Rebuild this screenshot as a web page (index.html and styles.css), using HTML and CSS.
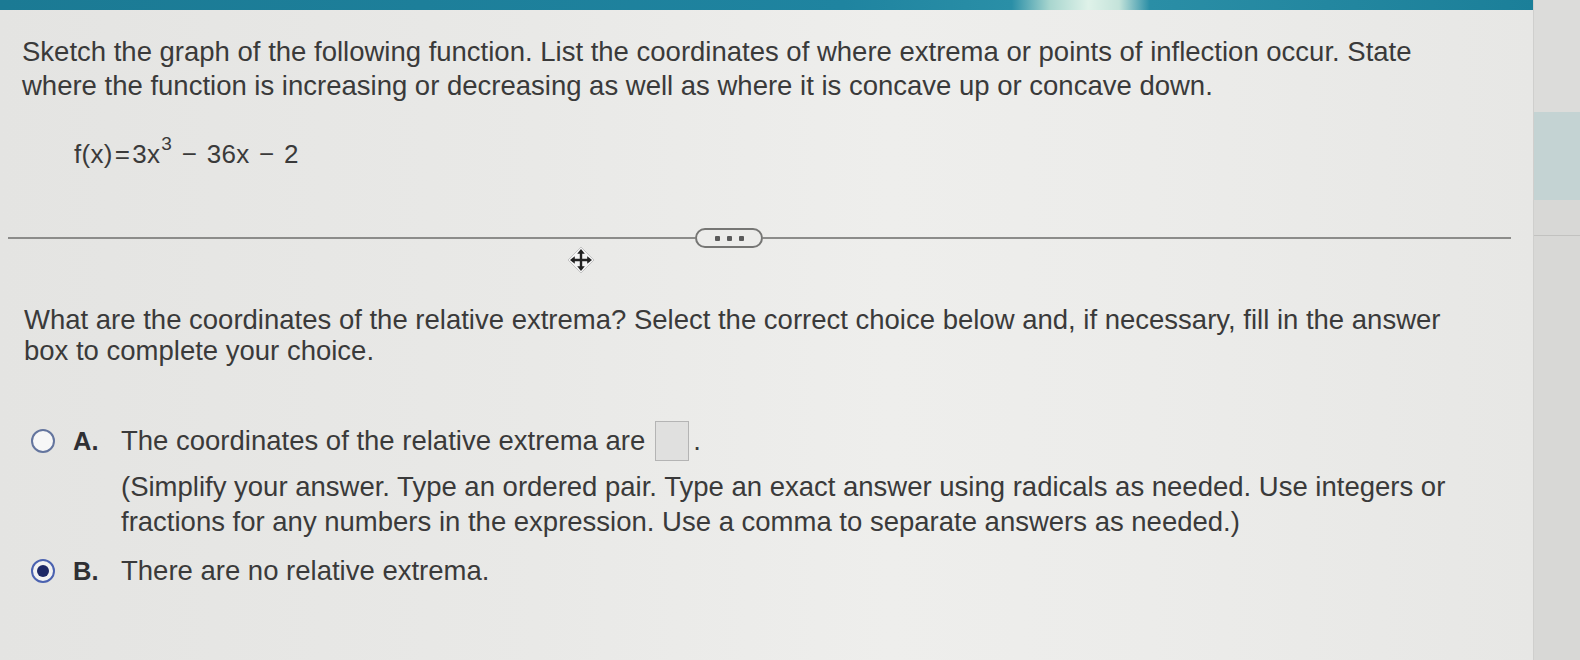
FILE: index.html
```html
<!DOCTYPE html>
<html>
<head>
<meta charset="utf-8">
<link rel="stylesheet" href="styles.css">
</head>
<body>
<div class="page">
  <div class="main">
    <div class="topbar"></div>
    <div class="content">
      <p class="prompt">Sketch the graph of the following function. List the coordinates of where extrema or points of inflection occur. State where the function is increasing or decreasing as well as where it is concave up or concave down.</p>
      <p class="func">f(x)<span class="eq">=</span>3x<sup>3</sup> <span class="op">&#8722;</span> 36x <span class="op">&#8722;</span> 2</p>
    </div>
    <div class="divider">
      <span class="rule rule-left"></span>
      <span class="more"><i></i><i></i><i></i></span>
      <span class="rule"></span>
    </div>
    <div class="mover">
      <svg width="30" height="30" viewBox="0 0 30 30">
        <path d="M15 2 L28 15 L15 28 L2 15 Z" fill="#f4f4f4" stroke="#c4c4c4" stroke-width="1"/>
        <path d="M15 6 V24 M6 15 H24" stroke="#222" stroke-width="2.4"/>
        <path d="M15 4 L11.2 8.8 H18.8 Z M15 26 L11.2 21.2 H18.8 Z M4 15 L8.8 11.2 V18.8 Z M26 15 L21.2 11.2 V18.8 Z" fill="#222"/>
      </svg>
    </div>
    <div class="content">
      <p class="question">What are the coordinates of the relative extrema? Select the correct choice below and, if necessary, fill in the answer box to complete your choice.</p>
      <div class="choice choice-a">
        <span class="radio"></span>
        <span class="letter">A.</span>
        <div class="ctext">
          <div class="cline">The coordinates of the relative extrema are <span class="ansbox"></span>.</div>
          <div class="hint">(Simplify your answer. Type an ordered pair. Type an exact answer using radicals as needed. Use integers or fractions for any numbers in the expression. Use a comma to separate answers as needed.)</div>
        </div>
      </div>
      <div class="choice choice-b">
        <span class="radio checked"></span>
        <span class="letter">B.</span>
        <div class="ctext">
          <div class="cline">There are no relative extrema.</div>
        </div>
      </div>
    </div>
  </div>
  <div class="side">
    <div class="side-top"></div>
    <div class="side-teal"></div>
    <div class="side-line"></div>
  </div>
</div>
</body>
</html>
```
FILE: styles.css
```css
* { box-sizing: border-box; }
html, body { margin: 0; padding: 0; }
body {
  width: 1580px;
  height: 660px;
  overflow: hidden;
  background: #d6d6d4;
  font-family: "Liberation Sans", Arial, sans-serif;
  color: #3a3a3a;
}
.page {
  display: flex;
  height: 660px;
}
.main {
  width: 1534px;
  background: linear-gradient(90deg, #e4e4e2 0%, #e9e9e7 35%, #eeeeec 58%, #ececea 75%, #e7e7e5 100%);
  display: flex;
  flex-direction: column;
  border-right: 1px solid #cfcfcd;
}
.topbar {
  height: 10px;
  background: linear-gradient(90deg, #1b7a94 0%, #1f84a0 55%, #2a8fa7 66%, #a9d6cf 68.5%, #dff2e9 71%, #c4e3da 73%, #2a8ea6 75%, #1b7f99 100%);
}
.content {
  padding: 0 0 0 22px;
}
.prompt {
  margin: 25px 0 0 0;
  font-size: 27.5px;
  line-height: 34px;
  width: 1460px;
}
.func {
  margin: 34px 0 0 52px;
  font-size: 26px;
  line-height: 34px;
  letter-spacing: 0.3px;
}
.func .eq { margin: 0 2px; }
.func sup {
  font-size: 19px;
  vertical-align: 13px;
  line-height: 0;
  margin-left: 1px;
}
.func .op { margin: 0 2px; }
.divider {
  display: flex;
  align-items: center;
  margin-top: 57px;
  padding-left: 8px;
  padding-right: 22px;
  height: 20px;
}
.rule {
  flex: 1;
  height: 2px;
  background: #8c8c8a;
}
.rule.rule-left {
  flex: 0 0 687px;
}
.more {
  width: 68px;
  height: 20px;
  border: 2px solid #767674;
  border-radius: 10px;
  display: flex;
  justify-content: center;
  align-items: center;
  gap: 7px;
  background: #ececea;
}
.more i {
  width: 5px;
  height: 5px;
  background: #5a5a5a;
  border-radius: 1px;
}
.mover {
  margin-left: 566px;
  margin-top: -3px;
  height: 30px;
}
.question {
  margin: 29px 0 0 2px;
  font-size: 27.5px;
  line-height: 31px;
  width: 1460px;
}
.choice {
  display: flex;
  align-items: flex-start;
}
.choice-a { margin-top: 55px; }
.choice-b { margin-top: 14px; }
.radio {
  width: 24px;
  height: 24px;
  border-radius: 50%;
  border: 2px solid #64759e;
  background: #f7f7f7;
  margin: 8px 0 0 9px;
  flex: none;
  position: relative;
}
.choice-b .radio { margin-top: 6px; }
.radio.checked {
  border: 2.5px solid #4b62b0;
  background: #f2f2f2;
}
.radio.checked::after {
  content: "";
  position: absolute;
  left: 3.5px;
  top: 3.5px;
  width: 12px;
  height: 12px;
  border-radius: 50%;
  background: #1d2866;
}
.letter {
  font-size: 25.5px;
  font-weight: bold;
  width: 48px;
  margin-left: 18px;
  line-height: 40px;
  color: #2f2f33;
  flex: none;
}
.choice-b .letter { line-height: 36px; }
.ctext {
  font-size: 27.5px;
  width: 1345px;
}
.cline {
  line-height: 40px;
  height: 40px;
  display: flex;
  align-items: center;
}
.choice-b .cline { line-height: 36px; height: 36px; }
.ansbox {
  display: inline-block;
  width: 34px;
  height: 40px;
  border: 1.5px solid #b4b4b4;
  background: #e0e0df;
  margin: 0 4px 0 10px;
}
.hint {
  margin-top: 8px;
  line-height: 35px;
}
.side {
  flex: 1;
  display: flex;
  flex-direction: column;
  background: #d8d8d6;
}
.side-top {
  height: 112px;
  background: #dcdcda;
}
.side-teal {
  height: 88px;
  background: #c4d3d3;
}
.side-line {
  height: 36px;
  border-bottom: 1px solid #c2c2c0;
}
```
